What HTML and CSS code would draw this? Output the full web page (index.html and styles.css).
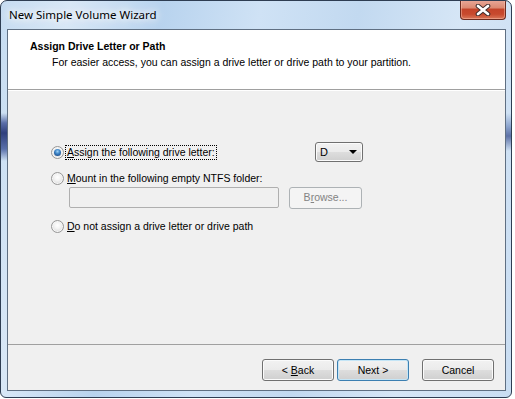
FILE: index.html
```html
<!DOCTYPE html>
<html>
<head>
<meta charset="utf-8">
<link rel="stylesheet" href="styles.css">
</head>
<body>
<div class="window">
  <div class="titlebar">
    <span class="title">New Simple Volume Wizard</span>
    <div class="close">
      <svg width="18" height="12" viewBox="0 0 18 12">
        <path d="M4 2 L14 10 M14 2 L4 10" stroke="#3b2a2a" stroke-width="4.6" stroke-linecap="round" fill="none"/>
        <path d="M4 2 L14 10 M14 2 L4 10" stroke="#ffffff" stroke-width="2.8" stroke-linecap="round" fill="none"/>
      </svg>
    </div>
  </div>
  <div class="client">
    <div class="header">
      <div class="h-title">Assign Drive Letter or Path</div>
      <div class="h-sub">For easier access, you can assign a drive letter or drive path to your partition.</div>
    </div>
    <div class="body">
      <div class="row row1">
        <div class="radio-row">
          <span class="radio checked"></span>
          <span class="lbl focus"><u>A</u>ssign the following drive letter:</span>
        </div>
        <div class="combo"><span class="combo-text">D</span><span class="arrow"></span></div>
      </div>
      <div class="row row2">
        <div class="radio-row">
          <span class="radio"></span>
          <span class="lbl"><u>M</u>ount in the following empty NTFS folder:</span>
        </div>
      </div>
      <div class="row folder-row">
        <div class="textbox"></div>
        <div class="btn browse"><span>B<u>r</u>owse...</span></div>
      </div>
      <div class="row row3">
        <div class="radio-row">
          <span class="radio"></span>
          <span class="lbl"><u>D</u>o not assign a drive letter or drive path</span>
        </div>
      </div>
    </div>
    <div class="footer">
      <div class="btn"><span>&lt; <u>B</u>ack</span></div>
      <div class="btn default"><span>Next &gt;</span></div>
      <div class="btn cancel"><span>Cancel</span></div>
    </div>
  </div>
</div>
</body>
</html>
```
FILE: styles.css
```css
html, body {
  margin: 0;
  padding: 0;
  background: #ffffff;
}

.window {
  box-sizing: border-box;
  width: 512px;
  height: 398px;
  border: 1px solid #2e3d52;
  border-radius: 7px 7px 6px 6px;
  padding: 0 5px 6px 6px;
  display: flex;
  flex-direction: column;
  background:
    linear-gradient(to bottom, transparent 112px, #5a6ea8 122px, #2f3f7c 132px, #5a70aa 148px, transparent 160px) left top / 6px 100% no-repeat,
    linear-gradient(to bottom, transparent 112px, #8ea6cf 125px, #5d71a6 135px, transparent 150px) right top / 5px 100% no-repeat,
    linear-gradient(100deg, #c6dcf1 0%, #d8e7f6 12%, #b8d3ee 28%, #cfe2f5 45%, #c2d9f0 62%, #d6e6f6 80%, #c9ddf2 100%);
  overflow: hidden;
}

.titlebar {
  height: 28px;
  flex: none;
  display: flex;
  align-items: flex-start;
  justify-content: space-between;
}

.title {
  font-family: "Noto Sans", "Liberation Sans", sans-serif;
  font-size: 11.5px;
  color: #000000;
  margin-top: 6px;
  margin-left: 2px;
  text-shadow: 0 0 6px #ffffff, 0 0 10px #ffffff, 0 0 14px rgba(255,255,255,0.9);
}

.close {
  width: 46px;
  height: 20px;
  margin-top: -1px;
  box-sizing: border-box;
  border: 1px solid #6b2b20;
  border-top: none;
  border-radius: 0 0 4px 4px;
  background: linear-gradient(to bottom, #e9a99a 0%, #dc8a73 40%, #c4442a 50%, #c84a2e 75%, #d9775a 100%);
  box-shadow: inset 0 0 0 1px rgba(255, 200, 180, 0.45);
  display: flex;
  align-items: center;
  justify-content: center;
}

.client {
  flex: none;
  box-sizing: border-box;
  width: 499px;
  height: 362px;
  border: 1px solid #5f6f82;
  background: #f0f0f0;
  display: flex;
  flex-direction: column;
  font-family: "Liberation Sans", Arial, sans-serif;
  font-size: 10.5px;
  color: #000000;
}

.header {
  flex: none;
  box-sizing: border-box;
  background: #ffffff;
  border-bottom: 1px solid #a0a0a0;
  box-shadow: 0 1px 0 #ffffff;
  padding: 10px 0 0 22px;
  height: 60px;
}

.h-title {
  font-weight: bold;
  line-height: 13px;
}

.h-sub {
  margin-top: 3px;
  margin-left: 22px;
  line-height: 13px;
}

.body {
  flex: none;
  margin-top: 1px;
  box-sizing: border-box;
  padding: 51px 0 0 43px;
  display: flex;
  flex-direction: column;
  border-bottom: 1px solid #a0a0a0;
  width: 100%;
  height: 254px;
}

.row {
  width: 312px;
  display: flex;
  align-items: center;
}

.row1 {
  height: 20px;
  justify-content: space-between;
}

.row2 {
  height: 14px;
  margin-top: 9px;
}

.folder-row {
  margin-top: 2px;
  height: 21px;
  padding-left: 18px;
  box-sizing: border-box;
  justify-content: space-between;
}

.row3 {
  height: 14px;
  margin-top: 11px;
}

.radio-row {
  display: flex;
  align-items: center;
}

.radio {
  width: 13px;
  height: 13px;
  box-sizing: border-box;
  border-radius: 50%;
  border: 1px solid #979797;
  background: radial-gradient(circle at 50% 40%, #ffffff 0%, #f4f4f4 35%, #dcdcdc 75%, #d0d0d0 100%);
  box-shadow: inset 0 0 0 1px #f6f6f6;
  flex: none;
  position: relative;
}

.radio.checked::after {
  content: "";
  position: absolute;
  left: 2px;
  top: 2px;
  width: 7px;
  height: 7px;
  border-radius: 50%;
  background: radial-gradient(circle at 50% 35%, #9cd0f5 0%, #3f86c8 40%, #1d4f8f 80%, #163f74 100%);
}

.lbl {
  margin-left: 3px;
  line-height: 13px;
  white-space: nowrap;
}

.focus {
  outline: 1px dotted #000000;
  outline-offset: 0px;
  padding-right: 1px;
  margin-left: 2px;
  padding-left: 1px;
}

u {
  text-decoration: underline;
  text-underline-offset: 1px;
}

.combo {
  width: 48px;
  height: 20px;
  box-sizing: border-box;
  border: 1px solid #707070;
  border-radius: 3px;
  background: linear-gradient(to bottom, #f2f2f2 0%, #ebebeb 48%, #dddddd 52%, #cfcfcf 100%);
  box-shadow: inset 0 0 0 1px #fbfbfb;
  display: flex;
  align-items: center;
  justify-content: space-between;
  padding: 0 5px 0 4px;
  font-size: 11px;
}

.combo-text {
  color: #000000;
}

.arrow {
  width: 0;
  height: 0;
  border-left: 4px solid transparent;
  border-right: 4px solid transparent;
  border-top: 4px solid #000000;
}

.textbox {
  width: 210px;
  height: 21px;
  box-sizing: border-box;
  border: 1px solid #afafaf;
  border-radius: 2px;
  background: #f0f0f0;
}

.btn {
  width: 72px;
  height: 22px;
  box-sizing: border-box;
  border: 1px solid #707070;
  border-radius: 3px;
  background: linear-gradient(to bottom, #f2f2f2 0%, #ebebeb 48%, #dddddd 52%, #cfcfcf 100%);
  box-shadow: inset 0 0 0 1px #fbfbfb;
  display: flex;
  align-items: center;
  justify-content: center;
  line-height: 13px;
  white-space: pre;
}

.browse {
  width: 73px;
  margin-right: 1px;
  border-color: #adb2b5;
  background: #f4f4f4;
  box-shadow: none;
  color: #838383;
}

.footer {
  margin-top: 1px;
  flex: 1;
  display: flex;
  justify-content: flex-end;
  align-items: flex-start;
  padding: 13px 11px 0 0;
  box-sizing: border-box;
}

.footer .btn + .btn {
  margin-left: 3px;
}

.footer .cancel {
  margin-left: 13px !important;
}

.btn.default {
  border-color: #3c7fb1;
  box-shadow: inset 0 0 0 1px #c4e5f6;
}
```
